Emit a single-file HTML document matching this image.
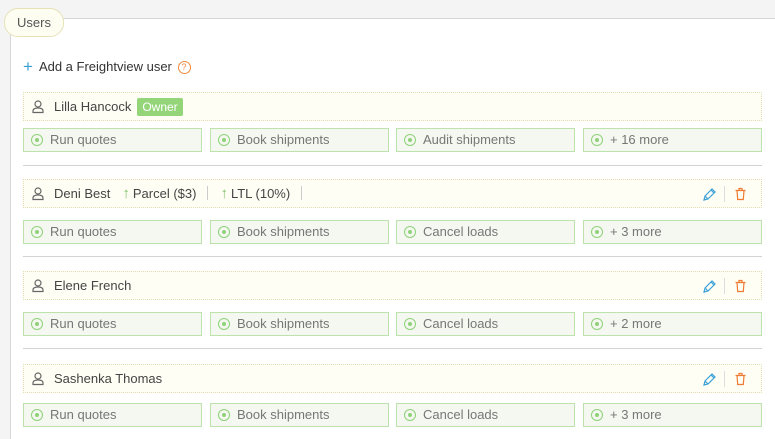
<!DOCTYPE html>
<html><head><style>
html,body{margin:0;width:775px;height:439px;overflow:hidden}
body{background:#f4f4f4;font-family:"Liberation Sans",sans-serif;position:relative}
.panel{position:absolute;left:10px;top:18px;width:800px;height:440px;background:#fff;border-left:1px solid #d6d6d6;border-top:1px solid #d6d6d6}
.tab{position:absolute;left:4px;top:8px;width:58px;height:27px;border:1px solid #e6e2b8;border-radius:14px;background:#fdfdf2;font-size:13px;color:#555;line-height:27px;text-align:center}
.add{position:absolute;left:23px;top:56px;font-size:13px;color:#333}
.add .p{color:#3aa0d8;font-size:17px;margin-right:6px;position:relative;top:1px}
.q{display:inline-block;width:11px;height:11px;border:1px solid #f08a3e;border-radius:50%;color:#f08a3e;font-size:9px;line-height:11px;text-align:center;vertical-align:1px;margin-left:2px}
.hdr{position:absolute;left:23px;width:737px;height:27px;border:1px dotted #e2ddb0;background:#fffef4;font-size:13px;color:#444;line-height:27px}
.hdr .n{position:absolute;left:30px}
.user{position:absolute;left:8px;top:7px}
.owner{display:inline-block;background:#95d57a;color:#fff;font-size:12px;line-height:18px;padding:0 5px;margin-left:6px;border-radius:2px}
.up{color:#7cc46a;margin:0 3px 0 12px;font-size:15px}
.sep{display:inline-block;width:1px;height:14px;background:#ccc;vertical-align:-2px;margin-left:11px}
.chip{position:absolute;width:177px;height:22px;border:1px solid #bde3ad;background:#f4f8f0;font-size:13px;color:#777;line-height:22px}
.chip i{position:absolute;left:7px;top:5px;width:12px;height:12px;border:1.5px solid #8fd27a;border-radius:50%;box-sizing:border-box}
.chip i:after{content:"";position:absolute;left:2.5px;top:2.5px;width:4px;height:4px;border-radius:50%;background:#8fd27a}
.chip span{position:absolute;left:26px}
.line{position:absolute;left:23px;width:739px;height:1px;background:#d3d3d3}
.vb{position:absolute;right:36px;top:6px;width:1px;height:16px;background:#ddd}
</style></head><body>
<div class="panel"></div>
<div class="tab">Users</div>
<div class="add"><span class="p">+</span>Add a Freightview user <span class="q">?</span></div>

<svg width="0" height="0" style="position:absolute"><defs>
<g id="u"><circle cx="6" cy="4" r="3" fill="none" stroke="#666" stroke-width="1.2"/><path d="M1 12.5v-1.5q0-3 5-3t5 3v1.5z" fill="none" stroke="#666" stroke-width="1.2"/></g>
<g id="pen"><path d="M2 13l1-4 7-7 3 3-7 7z M9 3l3 3 M3.5 9.5l2.5 2.5" fill="none" stroke="#3aa0d8" stroke-width="1.2"/></g>
<g id="tr"><path d="M1.5 3.5h10 M5 3.5v-2h3v2 M3 3.5l.7 9h5.6l.7-9" fill="none" stroke="#f07a32" stroke-width="1.2"/></g>
</defs></svg>

<div class="hdr" style="top:92px"><svg class="user" width="13" height="14"><use href="#u"/></svg><span class="n">Lilla Hancock<span class="owner">Owner</span></span></div>
<div class="chip" style="left:23px;top:128px"><i></i><span>Run quotes</span></div>
<div class="chip" style="left:210px;top:128px"><i></i><span>Book shipments</span></div>
<div class="chip" style="left:396px;top:128px"><i></i><span>Audit shipments</span></div>
<div class="chip" style="left:583px;top:128px"><i></i><span>+ 16 more</span></div>
<div class="line" style="top:165px"></div>

<div class="hdr" style="top:179px"><svg class="user" width="13" height="14"><use href="#u"/></svg><span class="n">Deni Best<span class="up">↑</span>Parcel ($3)<span class="sep"></span><span class="up">↑</span>LTL (10%)<span class="sep"></span></span>
<div class="vb"></div><svg style="position:absolute;right:45px;top:7px" width="14" height="14"><use href="#pen"/></svg><svg style="position:absolute;right:14px;top:7px" width="13" height="14"><use href="#tr"/></svg></div>
<div class="chip" style="left:23px;top:220px"><i></i><span>Run quotes</span></div>
<div class="chip" style="left:210px;top:220px"><i></i><span>Book shipments</span></div>
<div class="chip" style="left:396px;top:220px"><i></i><span>Cancel loads</span></div>
<div class="chip" style="left:583px;top:220px"><i></i><span>+ 3 more</span></div>
<div class="line" style="top:256px"></div>

<div class="hdr" style="top:271px"><svg class="user" width="13" height="14"><use href="#u"/></svg><span class="n">Elene French</span>
<div class="vb"></div><svg style="position:absolute;right:45px;top:7px" width="14" height="14"><use href="#pen"/></svg><svg style="position:absolute;right:14px;top:7px" width="13" height="14"><use href="#tr"/></svg></div>
<div class="chip" style="left:23px;top:312px"><i></i><span>Run quotes</span></div>
<div class="chip" style="left:210px;top:312px"><i></i><span>Book shipments</span></div>
<div class="chip" style="left:396px;top:312px"><i></i><span>Cancel loads</span></div>
<div class="chip" style="left:583px;top:312px"><i></i><span>+ 2 more</span></div>
<div class="line" style="top:348px"></div>

<div class="hdr" style="top:364px"><svg class="user" width="13" height="14"><use href="#u"/></svg><span class="n">Sashenka Thomas</span>
<div class="vb"></div><svg style="position:absolute;right:45px;top:7px" width="14" height="14"><use href="#pen"/></svg><svg style="position:absolute;right:14px;top:7px" width="13" height="14"><use href="#tr"/></svg></div>
<div class="chip" style="left:23px;top:403px"><i></i><span>Run quotes</span></div>
<div class="chip" style="left:210px;top:403px"><i></i><span>Book shipments</span></div>
<div class="chip" style="left:396px;top:403px"><i></i><span>Cancel loads</span></div>
<div class="chip" style="left:583px;top:403px"><i></i><span>+ 3 more</span></div>
</body></html>
